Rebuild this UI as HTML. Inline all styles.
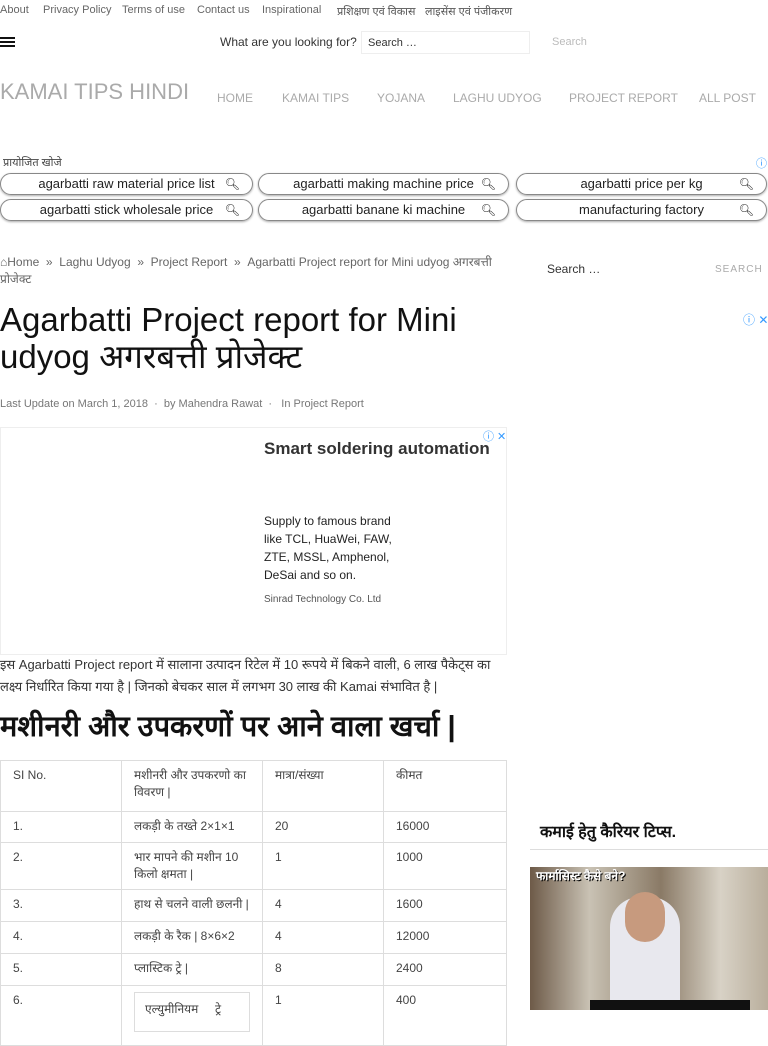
<!DOCTYPE html>
<html><head><meta charset="utf-8"><style>
*{margin:0;padding:0;box-sizing:border-box}
body{width:768px;height:1024px;overflow:hidden;background:#fff;font-family:"Liberation Sans","Noto Sans CJK SC",sans-serif;color:#333;position:relative}
.a{position:absolute;white-space:nowrap}
.top{font-size:11px;color:#666;top:4px}
.nav{font-size:12px;color:#aaa;top:91px}
.pill{position:absolute;height:22px;border:1px solid #888;border-radius:11px;font-size:13px;color:#222;text-align:center;line-height:20px;box-shadow:0 1px 2px #aaa}
.pill span{position:absolute;right:12px;top:0;font-size:12px}
table{position:absolute;left:0;top:760px;width:507px;border-collapse:collapse;font-size:12px;color:#444;line-height:17px}
td{border:1px solid #ddd;vertical-align:top;padding:6px 12px}
</style></head><body>
<div class="a top" style="left:0">About</div>
<div class="a top" style="left:43px">Privacy Policy</div>
<div class="a top" style="left:122px">Terms of use</div>
<div class="a top" style="left:197px">Contact us</div>
<div class="a top" style="left:262px">Inspirational</div>
<div class="a top" style="left:337px;color:#555">प्रशिक्षण एवं विकास</div>
<div class="a top" style="left:425px;color:#555">लाइसेंस एवं पंजीकरण</div>
<div class="a" style="left:0;top:37px;width:15px;height:2px;background:#111;box-shadow:0 4px 0 #111,0 8px 0 #111"></div>
<div class="a" style="left:220px;top:35px;font-size:12px;color:#333">What are you looking for?</div>
<div class="a" style="left:361px;top:31px;width:169px;height:23px;border:1px solid #eee;font-size:11px;padding:5px 6px;color:#333">Search …</div>
<div class="a" style="left:552px;top:36px;font-size:11px;color:#bbb">Search</div>
<div class="a" style="left:0;top:79px;font-size:22px;color:#aaa">KAMAI TIPS HINDI</div>
<div class="a nav" style="left:217px">HOME</div>
<div class="a nav" style="left:282px">KAMAI TIPS</div>
<div class="a nav" style="left:377px">YOJANA</div>
<div class="a nav" style="left:453px">LAGHU UDYOG</div>
<div class="a nav" style="left:569px">PROJECT REPORT</div>
<div class="a nav" style="left:699px">ALL POST</div>
<div class="a" style="left:3px;top:155px;font-size:11px;color:#444">प्रायोजित खोजे</div>
<div class="a" style="left:756px;top:155px;font-size:11px;color:#39f">ⓘ</div>
<div class="pill" style="left:0;top:173px;width:253px">agarbatti raw material price list<span>🔍︎</span></div>
<div class="pill" style="left:258px;top:173px;width:251px">agarbatti making machine price<span>🔍︎</span></div>
<div class="pill" style="left:516px;top:173px;width:251px">agarbatti price per kg<span>🔍︎</span></div>
<div class="pill" style="left:0;top:199px;width:253px">agarbatti stick wholesale price<span>🔍︎</span></div>
<div class="pill" style="left:258px;top:199px;width:251px">agarbatti banane ki machine<span>🔍︎</span></div>
<div class="pill" style="left:516px;top:199px;width:251px">manufacturing factory<span>🔍︎</span></div>
<div class="a" style="left:0;top:254px;font-size:12px;color:#666;line-height:17px;white-space:normal;width:500px">⌂Home &nbsp;» &nbsp;Laghu Udyog &nbsp;» &nbsp;Project Report &nbsp;» &nbsp;Agarbatti Project report for Mini udyog अगरबत्ती प्रोजेक्ट</div>
<div class="a" style="left:547px;top:262px;font-size:12px;color:#333">Search …</div>
<div class="a" style="left:715px;top:264px;font-size:10px;color:#aaa;letter-spacing:1px">SEARCH</div>
<div class="a" style="left:0;top:301px;font-size:33px;line-height:37px;color:#111;white-space:normal;width:507px">Agarbatti Project report for Mini udyog अगरबत्ती प्रोजेक्ट</div>
<div class="a" style="left:743px;top:311px;font-size:12px;color:#39f">ⓘ ✕</div>
<div class="a" style="left:0;top:398px;font-size:11px;color:#777">Last Update on March 1, 2018 &nbsp;· &nbsp;by Mahendra Rawat &nbsp;· &nbsp; In Project Report</div>
<div class="a" style="left:0;top:427px;width:507px;height:228px;border:1px solid #eee">
<div class="a" style="left:482px;top:0;font-size:11px;color:#39f">ⓘ ✕</div>
<div class="a" style="left:263px;top:11px;font-size:17px;font-weight:bold;color:#333;width:238px;overflow:hidden">Smart soldering automation</div>
<div class="a" style="left:263px;top:84px;font-size:12px;color:#222;line-height:18px;white-space:normal;width:140px">Supply to famous brand like TCL, HuaWei, FAW, ZTE, MSSL, Amphenol, DeSai and so on.</div>
<div class="a" style="left:263px;top:166px;font-size:10px;color:#555">Sinrad Technology Co. Ltd</div>
</div>
<div class="a" style="left:0;top:654px;font-size:13px;line-height:22px;color:#333;white-space:normal;width:507px">इस Agarbatti Project report में सालाना उत्पादन रिटेल में 10 रूपये में बिकने वाली, 6 लाख पैकेट्स का लक्ष्य निर्धारित किया गया है | जिनको बेचकर साल में लगभग 30 लाख की Kamai संभावित है |</div>
<div class="a" style="left:0;top:706px;font-size:29px;font-weight:bold;color:#111">मशीनरी और उपकरणों पर आने वाला खर्चा |</div>
<table>
<tr style="height:51px"><td style="width:121px">SI No.</td><td style="width:141px">मशीनरी और उपकरणो का विवरण |</td><td style="width:121px">मात्रा/संख्या</td><td>कीमत</td></tr>
<tr style="height:31px"><td>1.</td><td>लकड़ी के तख्ते 2×1×1</td><td>20</td><td>16000</td></tr>
<tr style="height:47px"><td>2.</td><td>भार मापने की मशीन 10 किलो क्षमता |</td><td>1</td><td>1000</td></tr>
<tr style="height:32px"><td>3.</td><td>हाथ से चलने वाली छलनी |</td><td>4</td><td>1600</td></tr>
<tr style="height:32px"><td>4.</td><td>लकड़ी के रैक | 8×6×2</td><td>4</td><td>12000</td></tr>
<tr style="height:32px"><td>5.</td><td>प्लास्टिक ट्रे |</td><td>8</td><td>2400</td></tr>
<tr style="height:60px"><td>6.</td><td><div style="border:1px solid #ddd;padding:8px 10px;height:40px">एल्युमीनियम &nbsp; &nbsp; ट्रे</div></td><td>1</td><td>400</td></tr>
</table>
<div class="a" style="left:540px;top:820px;font-size:16px;color:#111;font-weight:bold">कमाई हेतु कैरियर टिप्स.</div>
<div class="a" style="left:530px;top:849px;width:238px;height:1px;background:#ddd"></div>
<div class="a" style="left:530px;top:867px;width:238px;height:143px;background:linear-gradient(90deg,#6d5a48 0%,#c9c2b4 25%,#8a7a66 55%,#d8d2c6 80%,#b9ae9c 100%)">
<div class="a" style="left:80px;top:30px;width:70px;height:113px;background:#e8e8ee;border-radius:30px 30px 0 0"></div>
<div class="a" style="left:95px;top:25px;width:40px;height:50px;background:#c79a7e;border-radius:20px"></div>
<div class="a" style="left:60px;top:133px;width:160px;height:10px;background:#111"></div>
<div class="a" style="left:6px;top:0;font-size:12px;color:#fff;font-weight:bold;text-shadow:1px 1px 0 #000">फार्मासिस्ट कैसे बने?</div>
</div>
</body></html>
